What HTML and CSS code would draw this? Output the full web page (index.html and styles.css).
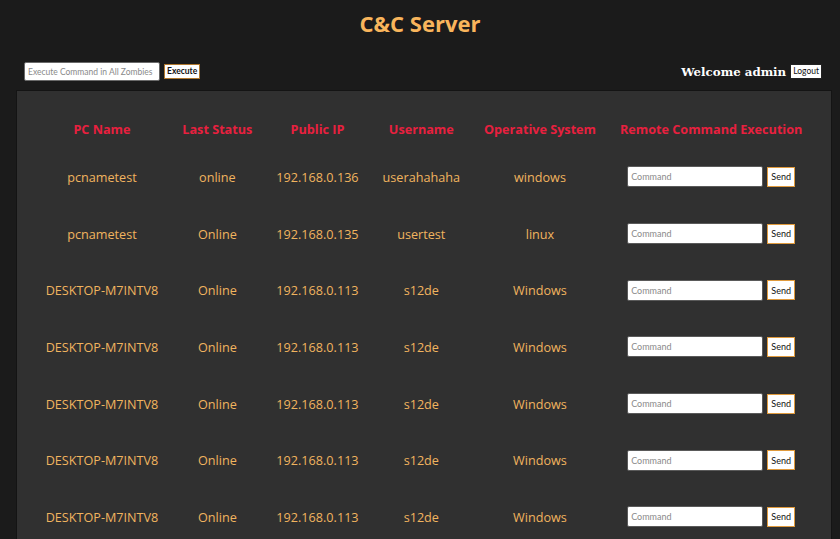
FILE: index.html
```html
<!DOCTYPE html>
<html>
<head>
<meta charset="utf-8">
<title>C&amp;C Server</title>
<link rel="stylesheet" href="styles.css">
</head>
<body>
<h1 class="title">C&amp;C Server</h1>
<div class="topbar">
  <form class="exec-all">
    <input class="exec-input" type="text" placeholder="Execute Command in All Zombies">
    <button class="exec-btn" type="button">Execute</button>
  </form>
  <div class="user">
    <span class="welcome">Welcome admin</span>
    <button class="logout" type="button">Logout</button>
  </div>
</div>
<div class="panel">
  <table class="zombies">
    <thead>
      <tr>
        <th>PC Name</th>
        <th>Last Status</th>
        <th>Public IP</th>
        <th>Username</th>
        <th>Operative System</th>
        <th>Remote Command Execution</th>
      </tr>
    </thead>
    <tbody>
      <tr><td>pcnametest</td><td>online</td><td>192.168.0.136</td><td>userahahaha</td><td>windows</td><td><div class="cmd"><input class="cmd-input" type="text" placeholder="Command"><button class="send" type="button">Send</button></div></td></tr>
      <tr><td>pcnametest</td><td>Online</td><td>192.168.0.135</td><td>usertest</td><td>linux</td><td><div class="cmd"><input class="cmd-input" type="text" placeholder="Command"><button class="send" type="button">Send</button></div></td></tr>
      <tr><td>DESKTOP-M7INTV8</td><td>Online</td><td>192.168.0.113</td><td>s12de</td><td>Windows</td><td><div class="cmd"><input class="cmd-input" type="text" placeholder="Command"><button class="send" type="button">Send</button></div></td></tr>
      <tr><td>DESKTOP-M7INTV8</td><td>Online</td><td>192.168.0.113</td><td>s12de</td><td>Windows</td><td><div class="cmd"><input class="cmd-input" type="text" placeholder="Command"><button class="send" type="button">Send</button></div></td></tr>
      <tr><td>DESKTOP-M7INTV8</td><td>Online</td><td>192.168.0.113</td><td>s12de</td><td>Windows</td><td><div class="cmd"><input class="cmd-input" type="text" placeholder="Command"><button class="send" type="button">Send</button></div></td></tr>
      <tr><td>DESKTOP-M7INTV8</td><td>Online</td><td>192.168.0.113</td><td>s12de</td><td>Windows</td><td><div class="cmd"><input class="cmd-input" type="text" placeholder="Command"><button class="send" type="button">Send</button></div></td></tr>
      <tr><td>DESKTOP-M7INTV8</td><td>Online</td><td>192.168.0.113</td><td>s12de</td><td>Windows</td><td><div class="cmd"><input class="cmd-input" type="text" placeholder="Command"><button class="send" type="button">Send</button></div></td></tr>
    </tbody>
  </table>
</div>
</body>
</html>
```
FILE: styles.css
```css
html, body {
  margin: 0;
  padding: 0;
  background: #1b1b1b;
}
body {
  font-family: "Open Sans", "Noto Sans", sans-serif;
  overflow: hidden;
}
.title {
  margin: 0;
  padding-top: 8px;
  text-align: center;
  font-size: 22px;
  line-height: 30px;
  font-weight: 700;
  color: #f9b55c;
}
.topbar {
  display: flex;
  justify-content: space-between;
  align-items: center;
  margin: 24px 18px 0 24px;
  height: 19px;
}
.exec-all {
  display: flex;
  align-items: center;
  gap: 4px;
  margin: 0;
}
.exec-input {
  box-sizing: border-box;
  width: 136px;
  height: 19px;
  padding: 0 3px;
  border: 1px solid #6a6a6a;
  border-radius: 2px;
  background: #fff;
  font-family: "Lato", sans-serif;
  font-size: 8.5px;
}
.exec-input::placeholder,
.cmd-input::placeholder {
  color: #8a8a8a;
}
.exec-btn {
  box-sizing: border-box;
  height: 15px;
  padding: 0 2px;
  border: 1px solid #b0782e;
  background: #fff;
  color: #111;
  font-family: "Lato", sans-serif;
  font-weight: 700;
  font-size: 8.5px;
  line-height: 13px;
}
.user {
  display: flex;
  align-items: center;
  gap: 4px;
}
.welcome {
  font-family: "DejaVu Serif", serif;
  font-weight: 700;
  font-size: 11.8px;
  color: #fff;
}
.logout {
  box-sizing: border-box;
  height: 15px;
  padding: 0 2px;
  border: 1px solid #222;
  background: #fff;
  color: #111;
  font-family: "Lato", sans-serif;
  font-size: 8.5px;
  line-height: 13px;
}
.panel {
  margin: 9px 8px 0 16px;
  padding-top: 17.5px;
  height: 600px;
  background: #303030;
  border: 1px solid #141414;
  box-sizing: border-box;
}
.zombies {
  margin: 0 auto;
  border-collapse: collapse;
  text-align: center;
}
.zombies th {
  padding: 11px 12px;
  font-size: 12.65px;
  line-height: 18px;
  font-weight: 700;
  color: #e8203f;
  white-space: nowrap;
}
.zombies td {
  padding: 17.85px 12px;
  font-size: 12.65px;
  line-height: 20px;
  color: #f0b45f;
  white-space: nowrap;
}
.cmd {
  display: flex;
  align-items: center;
  justify-content: center;
  gap: 4px;
}
.cmd-input {
  box-sizing: border-box;
  width: 136px;
  height: 21px;
  padding: 0 3px;
  border: 1px solid #5a5a5a;
  border-radius: 2px;
  background: #fff;
  font-family: "Lato", sans-serif;
  font-size: 9px;
}
.send {
  box-sizing: border-box;
  width: 28px;
  height: 20px;
  padding: 0;
  border: 1px solid #e09a3c;
  background: #fff;
  color: #111;
  font-family: "Lato", sans-serif;
  font-size: 9px;
}
```
